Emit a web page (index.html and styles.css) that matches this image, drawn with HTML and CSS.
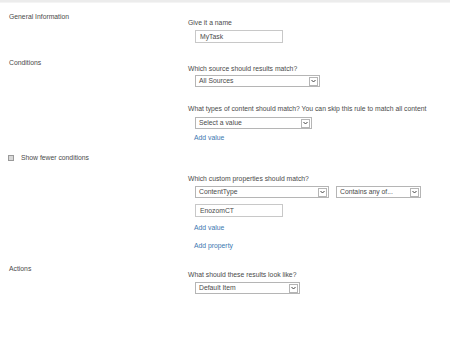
FILE: index.html
```html
<!DOCTYPE html>
<html lang="en">
<head>
    <meta charset="UTF-8">
    <title>Query Rule</title>
    <link rel="stylesheet" href="styles.css">
</head>
<body>
    <div class="topbar"></div>

    <div class="section general">
        <div class="section-label">General Information</div>
        <div class="fields">
            <div class="field-title">Give it a name</div>
            <div class="textbox name-box">MyTask</div>
        </div>
    </div>

    <div class="section conditions">
        <div class="section-label">Conditions</div>
        <div class="fields">
            <div class="field-title">Which source should results match?</div>
            <div class="dropdown source-select"><span class="value">All Sources</span><span class="arrow"><svg width="5" height="4" viewBox="0 0 5 4"><path d="M0.5 1 L2.5 3 L4.5 1" fill="none" stroke="#444" stroke-width="1"/></svg></span></div>

            <div class="field-title spaced">What types of content should match? You can skip this rule to match all content</div>
            <div class="dropdown type-select"><span class="value">Select a value</span><span class="arrow"><svg width="5" height="4" viewBox="0 0 5 4"><path d="M0.5 1 L2.5 3 L4.5 1" fill="none" stroke="#444" stroke-width="1"/></svg></span></div>
            <a class="link add-value" href="#">Add value</a>
        </div>
    </div>

    <div class="toggle-row">
        <span class="toggle-icon"></span>
        <span>Show fewer conditions</span>
    </div>

    <div class="section custom">
        <div class="section-label"></div>
        <div class="fields">
            <div class="field-title">Which custom properties should match?</div>
            <div class="dropdown-row">
                <div class="dropdown prop-select"><span class="value">ContentType</span><span class="arrow"><svg width="5" height="4" viewBox="0 0 5 4"><path d="M0.5 1 L2.5 3 L4.5 1" fill="none" stroke="#444" stroke-width="1"/></svg></span></div>
                <div class="dropdown op-select"><span class="value">Contains any of...</span><span class="arrow"><svg width="5" height="4" viewBox="0 0 5 4"><path d="M0.5 1 L2.5 3 L4.5 1" fill="none" stroke="#444" stroke-width="1"/></svg></span></div>
            </div>
            <div class="textbox value-box">EnozomCT</div>
            <a class="link add-value2" href="#">Add value</a>
            <a class="link add-property" href="#">Add property</a>
        </div>
    </div>

    <div class="section actions">
        <div class="section-label">Actions</div>
        <div class="fields">
            <div class="field-title">What should these results look like?</div>
            <div class="dropdown look-select"><span class="value">Default Item</span><span class="arrow"><svg width="5" height="4" viewBox="0 0 5 4"><path d="M0.5 1 L2.5 3 L4.5 1" fill="none" stroke="#444" stroke-width="1"/></svg></span></div>
        </div>
    </div>
</body>
</html>
```

FILE: styles.css
```css
* {
    margin: 0;
    padding: 0;
    box-sizing: border-box;
}

body {
    font-family: 'Liberation Sans', Arial, sans-serif;
    font-size: 6.8px;
    line-height: 8px;
    color: #4a4a4a;
    background: white;
    width: 474px;
    height: 345px;
    overflow: hidden;
}

.topbar {
    width: 450px;
    height: 3px;
    background: #ececec;
    border-bottom: 1px solid #f4f4f4;
}

.section {
    display: flex;
}

.section-label {
    width: 188px;
    padding-left: 9px;
    flex-shrink: 0;
}

.fields {
    padding-top: 6px;
    display: flex;
    flex-direction: column;
    align-items: flex-start;
}

.general {
    margin-top: 10px;
}

.conditions {
    margin-top: 16px;
}

.field-title.spaced {
    margin-top: 18px;
}

.textbox {
    width: 88px;
    height: 13px;
    border: 1px solid #c8c8c8;
    padding-left: 4px;
    line-height: 11px;
    margin-left: 7px;
}

.name-box {
    margin-top: 3px;
}

.dropdown {
    height: 12px;
    border: 1px solid #b5b5b5;
    display: flex;
    align-items: center;
    justify-content: space-between;
    margin-left: 7px;
    background: white;
}

.dropdown .value {
    padding-left: 3px;
}

.dropdown .arrow {
    width: 9px;
    height: 9px;
    border: 1px solid #b5b5b5;
    margin-right: 1px;
    display: flex;
    align-items: center;
    justify-content: center;
}

.source-select {
    width: 125px;
    margin-top: 2px;
}

.type-select {
    width: 117px;
    margin-top: 4px;
}

.link {
    color: #3c77b0;
    text-decoration: none;
    margin-left: 6px;
}

.add-value {
    margin-top: 5px;
}

.toggle-row {
    display: flex;
    align-items: center;
    margin-top: 12px;
    padding-left: 8px;
    height: 8px;
}

.toggle-icon {
    width: 6px;
    height: 6px;
    border: 1px solid #9a9a9a;
    background: #d8d8d8;
    margin-right: 7px;
}

.custom .fields {
    padding-top: 13px;
}

.dropdown-row {
    display: flex;
    margin-top: 3px;
}

.prop-select {
    width: 134px;
}

.op-select {
    width: 85px;
}

.value-box {
    margin-top: 6px;
}

.add-value2 {
    margin-top: 7px;
}

.add-property {
    margin-top: 10px;
}

.actions {
    margin-top: 15px;
}

.look-select {
    width: 105px;
    margin-top: 3px;
}
```
